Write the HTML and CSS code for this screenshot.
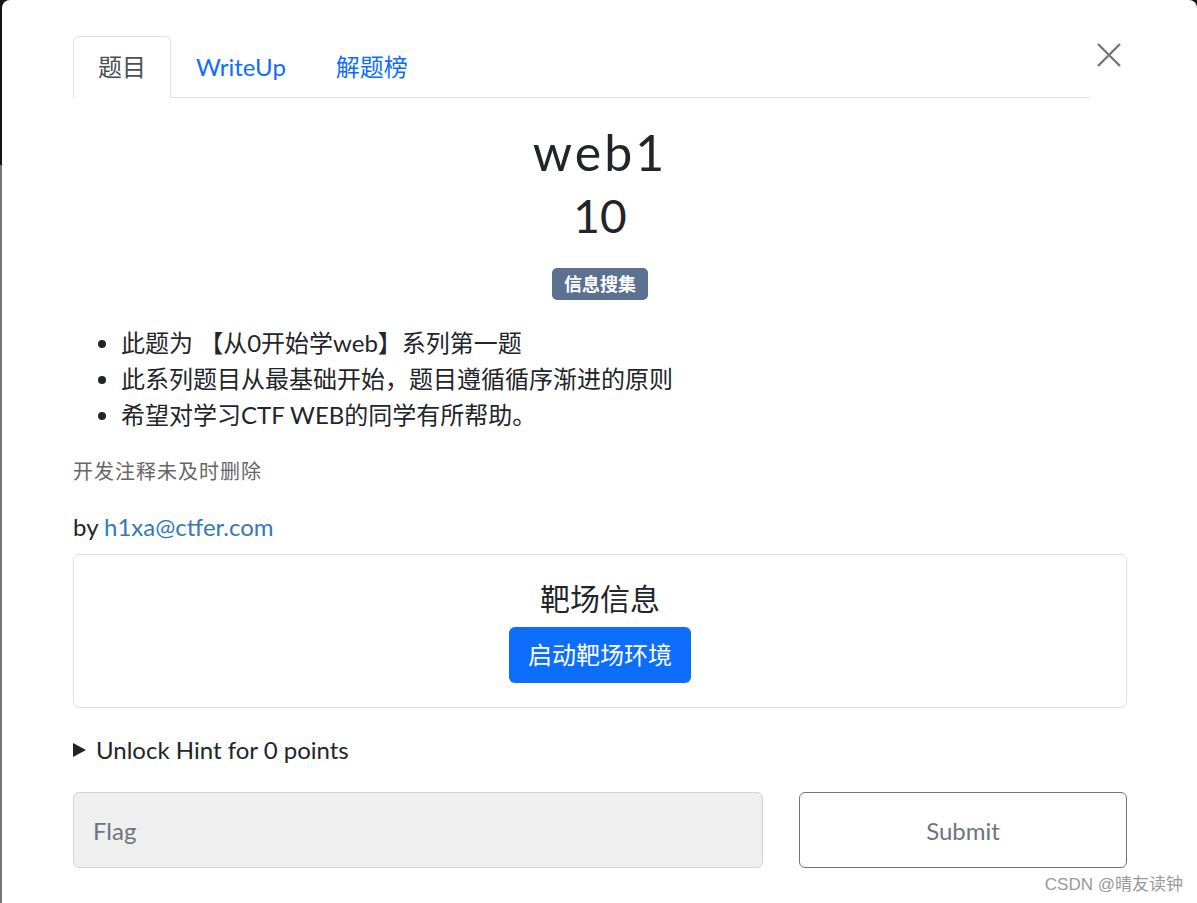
FILE: index.html
```html
<!DOCTYPE html>
<html lang="zh-CN">
<head>
    <meta charset="UTF-8">
    <title>web1</title>
    <link rel="stylesheet" href="styles.css">
</head>
<body>
    <div class="modal">
        <div class="modal-top">
            <ul class="nav-tabs">
                <li class="nav-item active">题目</li>
                <li class="nav-item">WriteUp</li>
                <li class="nav-item">解题榜</li>
            </ul>
            <button class="btn-close" aria-label="Close">
                <svg width="24" height="24" viewBox="0 0 24 24">
                    <path d="M1 1 L23 23 M23 1 L1 23" stroke="#777" stroke-width="2.4" fill="none"/>
                </svg>
            </button>
        </div>

        <h2 class="challenge-name">web1</h2>
        <h3 class="challenge-value">10</h3>
        <div class="tags">
            <span class="badge">信息搜集</span>
        </div>

        <ul class="desc">
            <li>此题为 【从0开始学web】系列第一题</li>
            <li>此系列题目从最基础开始，题目遵循循序渐进的原则</li>
            <li>希望对学习CTF WEB的同学有所帮助。</li>
        </ul>
        <p class="note">开发注释未及时删除</p>
        <p class="author">by <a href="#">h1xa@ctfer.com</a></p>

        <div class="card">
            <h4>靶场信息</h4>
            <button class="btn-primary">启动靶场环境</button>
        </div>

        <div class="hint">
            <span class="caret"></span>
            <span>Unlock Hint for 0 points</span>
        </div>

        <div class="submit-row">
            <input class="flag-input" type="text" placeholder="Flag">
            <button class="btn-submit">Submit</button>
        </div>
    </div>
    <div class="watermark">CSDN @晴友读钟</div>
</body>
</html>
```

FILE: styles.css
```css
* {
    margin: 0;
    padding: 0;
    box-sizing: border-box;
}

html, body {
    height: 100%;
}

body {
    font-family: Lato, "Noto Sans CJK SC", sans-serif;
    font-size: 24px;
    line-height: 1.5;
    color: #212529;
    background: linear-gradient(#151515 0, #151515 165px, #777 165px) left top / 2px 100% no-repeat, #151515;
    overflow: hidden;
    position: relative;
}

.modal {
    background: #fff;
    margin-left: 2px;
    height: 100%;
    border-radius: 8px 8px 0 0;
    padding: 36px 70px 0 71px;
}

.modal-top {
    display: flex;
    align-items: flex-start;
}

.nav-tabs {
    list-style: none;
    display: flex;
    flex: 1;
    border-bottom: 1px solid #dee2e6;
}

.nav-item {
    padding: 12px 24px;
    margin-bottom: -1px;
    border: 1px solid transparent;
    border-radius: 6px 6px 0 0;
    color: #0d6efd;
}

.nav-item.active {
    color: #495057;
    background: #fff;
    border-color: #dee2e6 #dee2e6 #fff;
}

.btn-close {
    border: none;
    background: none;
    width: 37px;
    display: flex;
    padding: 7px 0 0 7px;
}

.challenge-name {
    text-align: center;
    font-weight: 400;
    font-size: 50px;
    letter-spacing: 3px;
    line-height: 1.2;
    margin-top: 24px;
}

.challenge-value {
    text-align: center;
    font-weight: 400;
    font-size: 46px;
    line-height: 1.2;
    margin-top: 6px;
}

.tags {
    text-align: center;
    margin-top: 25px;
    line-height: 1;
}

.badge {
    display: inline-block;
    background: #5c7190;
    color: #fff;
    font-weight: 700;
    font-size: 18px;
    padding: 7px 12px;
    border-radius: 5px;
}

.desc {
    margin-top: 25px;
    padding-left: 48px;
}

.desc li {
    line-height: 36px;
}

.note {
    color: #666;
    font-size: 20px;
    margin-top: 23px;
    letter-spacing: 1px;
}

.author {
    margin-top: 23px;
}

.author a {
    color: #337ab7;
    text-decoration: none;
}

.card {
    border: 1px solid #dfdfdf;
    border-radius: 6px;
    margin-top: 9px;
    padding: 25px 0 24px;
    display: flex;
    flex-direction: column;
    align-items: center;
}

.card h4 {
    font-weight: 400;
    font-size: 30px;
    line-height: 1.2;
}

.btn-primary {
    margin-top: 11px;
    background: #0d6efd;
    color: #fff;
    border: none;
    border-radius: 6px;
    font-family: inherit;
    font-size: 24px;
    padding: 10px 19px;
    line-height: 36px;
}

.hint {
    margin-top: 24px;
    display: flex;
    align-items: center;
    gap: 10px;
}

.caret {
    width: 0;
    height: 0;
    border-left: 13px solid #212529;
    border-top: 7px solid transparent;
    border-bottom: 7px solid transparent;
}

.submit-row {
    margin-top: 24px;
    display: grid;
    grid-template-columns: 690px 1fr;
    gap: 36px;
}

.flag-input {
    height: 76px;
    background: #efefef;
    border: 1px solid #ced4da;
    border-radius: 6px;
    font-family: inherit;
    font-size: 24px;
    padding: 0 19px;
    color: #495057;
}

.flag-input::placeholder {
    color: #6c757d;
}

.btn-submit {
    height: 76px;
    background: #fff;
    border: 1px solid #6c757d;
    border-radius: 6px;
    color: #6c757d;
    font-family: inherit;
    font-size: 24px;
}

.watermark {
    position: absolute;
    right: 14px;
    bottom: 6px;
    font-family: "Liberation Sans", "Noto Sans CJK SC", sans-serif;
    font-size: 17px;
    color: #999;
}
```
